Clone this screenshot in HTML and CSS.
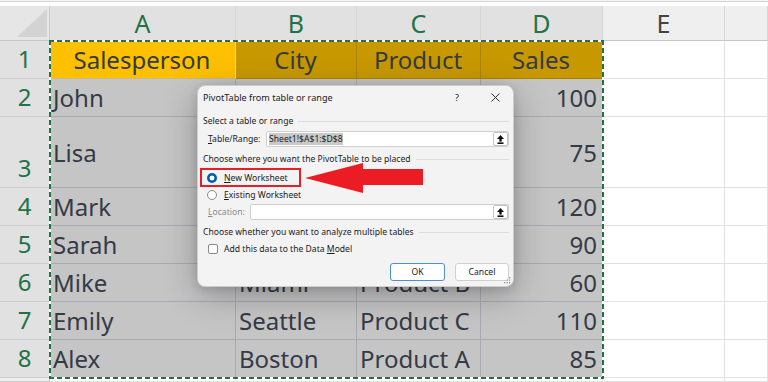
FILE: index.html
```html
<!DOCTYPE html>
<html>
<head>
<meta charset="utf-8">
<link rel="stylesheet" href="styles.css">
</head>
<body>
<div class="app">
  <div class="topbar"></div>
  <div class="sheet">
    <div class="corner"><svg width="30" height="28" viewBox="0 0 30 28"><polygon points="30,0 30,28 0,28" fill="#d3d3d3"/></svg></div>
    <div class="ch sel">A</div><div class="ch sel">B</div><div class="ch sel">C</div><div class="ch sel">D</div><div class="ch">E</div><div class="ch"></div>

    <div class="rh">1</div><div class="c hd active">Salesperson</div><div class="c hd">City</div><div class="c hd">Product</div><div class="c hd">Sales</div><div class="c"></div><div class="c"></div>
    <div class="rh">2</div><div class="c s">John</div><div class="c s"></div><div class="c s"></div><div class="c s num">100</div><div class="c"></div><div class="c"></div>
    <div class="rh">3</div><div class="c s">Lisa</div><div class="c s"></div><div class="c s"></div><div class="c s num">75</div><div class="c"></div><div class="c"></div>
    <div class="rh">4</div><div class="c s">Mark</div><div class="c s"></div><div class="c s"></div><div class="c s num">120</div><div class="c"></div><div class="c"></div>
    <div class="rh">5</div><div class="c s">Sarah</div><div class="c s"></div><div class="c s"></div><div class="c s num">90</div><div class="c"></div><div class="c"></div>
    <div class="rh">6</div><div class="c s">Mike</div><div class="c s">Miami</div><div class="c s">Product B</div><div class="c s num">60</div><div class="c"></div><div class="c"></div>
    <div class="rh">7</div><div class="c s">Emily</div><div class="c s">Seattle</div><div class="c s">Product C</div><div class="c s num">110</div><div class="c"></div><div class="c"></div>
    <div class="rh">8</div><div class="c s">Alex</div><div class="c s">Boston</div><div class="c s">Product A</div><div class="c s num">85</div><div class="c"></div><div class="c"></div>
    <div class="rh off"></div><div class="c"></div><div class="c"></div><div class="c"></div><div class="c"></div><div class="c"></div><div class="c"></div>
  </div>

  <div class="selection"></div>

  <div class="dialog">
    <div class="dlg-title">
      <span class="dlg-title-text">PivotTable from table or range</span>
      <span class="dlg-help">?</span>
      <span class="dlg-close"><svg width="9" height="9" viewBox="0 0 9 9"><path d="M0.5 0.5L8.5 8.5M8.5 0.5L0.5 8.5" stroke="#2a2a2a" stroke-width="1"/></svg></span>
    </div>
    <div class="group">Select a table or range</div>
    <div class="field">
      <span class="flabel"><u>T</u>able/Range:</span>
      <div class="input"><span class="seltext">Sheet1!$A$1:$D$8</span>
        <span class="collapse"><svg width="7" height="9" viewBox="0 0 7 9"><polygon points="3.5,0 7,4 0,4" fill="#111"/><rect x="2.3" y="4" width="2.4" height="2.6" fill="#111"/><rect x="0.5" y="7.4" width="6" height="1.6" fill="#111"/></svg></span>
      </div>
    </div>
    <div class="group">Choose where you want the PivotTable to be placed</div>
    <div class="option first"><span class="radio on"></span><span><u>N</u>ew Worksheet</span></div>
    <div class="option"><span class="radio"></span><span><u>E</u>xisting Worksheet</span></div>
    <div class="field loc">
      <span class="flabel dis"><u>L</u>ocation:</span>
      <div class="input">
        <span class="collapse"><svg width="7" height="9" viewBox="0 0 7 9"><polygon points="3.5,0 7,4 0,4" fill="#111"/><rect x="2.3" y="4" width="2.4" height="2.6" fill="#111"/><rect x="0.5" y="7.4" width="6" height="1.6" fill="#111"/></svg></span>
      </div>
    </div>
    <div class="group">Choose whether you want to analyze multiple tables</div>
    <div class="check"><span class="box"></span><span>Add this data to the Data <u>M</u>odel</span></div>
    <div class="buttons"><span class="btn primary">OK</span><span class="btn">Cancel</span></div>
    <svg class="grip" width="7" height="7" viewBox="0 0 7 7"><rect x="5" y="0" width="1.3" height="1.3" fill="#9a9a9a"/><rect x="2.5" y="2.5" width="1.3" height="1.3" fill="#9a9a9a"/><rect x="5" y="2.5" width="1.3" height="1.3" fill="#9a9a9a"/><rect x="0" y="5" width="1.3" height="1.3" fill="#9a9a9a"/><rect x="2.5" y="5" width="1.3" height="1.3" fill="#9a9a9a"/><rect x="5" y="5" width="1.3" height="1.3" fill="#9a9a9a"/></svg>
  </div>

  <div class="callout-box"></div>
  <svg class="callout-arrow" width="130" height="36" viewBox="0 0 130 36"><polygon points="5,18 63,3 63,9 123,9 123,25 63,25 63,33" fill="#ec1c24"/></svg>
</div>
</body>
</html>
```

FILE: styles.css
```css
* { box-sizing: border-box; }
html, body { margin: 0; padding: 0; }
body {
  width: 768px;
  height: 382px;
  overflow: hidden;
  background: #fff;
  font-family: "Noto Sans", "Open Sans", sans-serif;
}
.app {
  position: relative;
  width: 768px;
  height: 382px;
  overflow: hidden;
}
.topbar {
  height: 6px;
  background: linear-gradient(#f4f4f4 0 1px, #d6d6d6 1px 2px, #fff 2px);
}
.sheet {
  display: grid;
  grid-template-columns: 50px 186px 121px 124px 122px 122px 43px;
  grid-template-rows: 35px 38px 38px 71px 38px 38px 38px 38px 38px;
  height: 376px;
  overflow: hidden;
}
.corner {
  background: #e6e6e6;
  border-right: 1px solid #cfcfcf;
  border-bottom: 1px solid #c6c6c6;
  display: flex;
  justify-content: flex-end;
  align-items: flex-end;
  padding: 0 2px 3px 0;
}
.ch {
  display: flex;
  align-items: center;
  justify-content: center;
  font-size: 25px;
  color: #444;
  background: #efefef;
  border-right: 1px solid #d6d6d6;
  border-bottom: 1px solid #c6c6c6;
}
.ch.sel {
  background: #e1e1e1;
  color: #217346;
}
.rh {
  display: flex;
  align-items: flex-end;
  justify-content: center;
  padding-bottom: 3px;
  line-height: 32px;
  font-size: 24px;
  color: #217346;
  background: #e1e1e1;
  border-right: 1px solid #c6c6c6;
  border-bottom: 1px solid #cdcdcd;
}
.rh.off {
  background: #efefef;
}
.c {
  display: flex;
  align-items: center;
  padding: 0 4px 0 3px;
  font-size: 24px;
  color: #343a46;
  border-right: 1px solid #e2e2e2;
  border-bottom: 1px solid #e2e2e2;
  white-space: nowrap;
  overflow: hidden;
}
.c.s {
  background: #c5c5c5;
  border-color: #a9a9b1;
}
.c.hd {
  justify-content: center;
  background: #c79800;
  border-color: #a98300;
}
.c.hd.active {
  background: #ffc000;
  border-right-color: #e4dcc4;
  border-bottom-color: #c9b890;
}
.c.num {
  justify-content: flex-end;
  padding-right: 5px;
}

/* copy marquee around A1:D8 */
.selection {
  position: absolute;
  left: 49px;
  top: 40px;
  width: 555px;
  height: 339px;
  background:
    linear-gradient(90deg, #217346 62%, #fff 62%) left top / 8px 2px repeat-x,
    linear-gradient(90deg, #217346 62%, #fff 62%) left bottom / 8px 2px repeat-x,
    linear-gradient(180deg, #217346 62%, #fff 62%) left top / 2px 8px repeat-y,
    linear-gradient(180deg, #217346 62%, #fff 62%) right top / 2px 8px repeat-y;
}

/* dialog */
.dialog {
  position: absolute;
  left: 197px;
  top: 85px;
  width: 317px;
  height: 202px;
  background: #f3f3f3;
  border: 1px solid #cdcdcd;
  border-radius: 8px;
  box-shadow: 0 8px 34px rgba(0, 0, 0, 0.28), 0 2px 8px rgba(0, 0, 0, 0.12);
  padding: 0 4px 0 5px;
  font-size: 8.6px;
  color: #1a1a1a;
  display: flex;
  flex-direction: column;
}
.dlg-title {
  height: 23px;
  display: flex;
  align-items: center;
}
.dlg-title-text {
  flex: 1;
  font-size: 9.1px;
}
.dlg-help {
  width: 20px;
  text-align: center;
  margin-right: 14px;
  font-size: 9px;
}
.dlg-close {
  width: 28px;
  display: flex;
  justify-content: center;
}
.group {
  display: flex;
  align-items: center;
  height: 14px;
  margin-top: 5px;
  white-space: nowrap;
}
.group::after {
  content: "";
  flex: 1;
  height: 1px;
  background: #dcdcdc;
  margin-left: 5px;
}
.field {
  display: flex;
  align-items: center;
  height: 16px;
  margin-top: 3px;
  padding-left: 5px;
}
.field.loc {
  margin-top: 1px;
}
.flabel {
  width: 58px;
  flex: none;
}
.loc .flabel {
  width: 42px;
}
.flabel.dis {
  color: #8a8a8a;
}
.input {
  flex: 1;
  height: 16px;
  background: #fff;
  border: 1px solid #cfcfcf;
  border-radius: 2px;
  display: flex;
  align-items: center;
  padding-left: 2px;
}
.seltext {
  background: #c9c9c9;
  color: #222;
  line-height: 12px;
}
.collapse {
  margin-left: auto;
  width: 15px;
  height: 14px;
  border: 1px solid #c4c4c4;
  border-radius: 2px;
  background: #fff;
  display: flex;
  align-items: center;
  justify-content: center;
}
.option {
  display: flex;
  align-items: center;
  gap: 7px;
  height: 16px;
  margin-top: 1px;
  padding-left: 4px;
}
.option.first {
  margin-top: 4px;
}
.radio {
  width: 10px;
  height: 10px;
  border-radius: 50%;
  border: 1px solid #8a8a8a;
  background: #fdfdfd;
  flex: none;
}
.radio.on {
  border: none;
  background: radial-gradient(circle, #fff 0 2.2px, #005fb8 2.7px);
}
.check {
  display: flex;
  align-items: center;
  gap: 6px;
  height: 16px;
  margin-top: 2px;
  padding-left: 5px;
}
.box {
  width: 10px;
  height: 10px;
  border: 1px solid #8a8a8a;
  border-radius: 2px;
  background: #fff;
  flex: none;
}
.buttons {
  display: flex;
  justify-content: flex-end;
  gap: 10px;
  margin-top: 6px;
  height: 18px;
}
.btn {
  width: 54px;
  height: 18px;
  border: 1px solid #d0d0d0;
  border-radius: 3px;
  background: #fdfdfd;
  display: flex;
  align-items: center;
  justify-content: center;
}
.btn.primary {
  width: 55px;
  border-color: #4a8fd8;
  background: #fff;
}
.grip {
  position: absolute;
  right: 2px;
  bottom: 2px;
}

/* annotation */
.callout-box {
  position: absolute;
  left: 200px;
  top: 168px;
  width: 101px;
  height: 19px;
  border: 2px solid #e3202a;
}
.callout-arrow {
  position: absolute;
  left: 300px;
  top: 160px;
}
```
